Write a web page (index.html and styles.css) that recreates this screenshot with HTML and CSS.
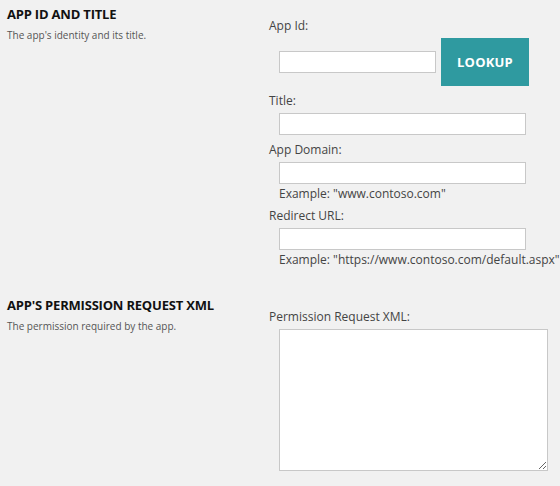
FILE: index.html
```html
<!DOCTYPE html>
<html lang="en">
<head>
<meta charset="utf-8">
<title>App Registration</title>
<link rel="stylesheet" href="styles.css">
</head>
<body>
<form class="page">
  <section class="section section-first">
    <div class="info">
      <h2 class="info-title">APP ID AND TITLE</h2>
      <p class="info-desc">The app's identity and its title.</p>
    </div>
    <div class="fields">
      <label class="label">App Id:</label>
      <div class="lookup-row">
        <input class="input input-short" type="text">
        <button class="btn-lookup" type="button">LOOKUP</button>
      </div>
      <label class="label">Title:</label>
      <div class="indent"><input class="input" type="text"></div>
      <label class="label">App Domain:</label>
      <div class="indent"><input class="input" type="text"></div>
      <div class="hint">Example: "www.contoso.com"</div>
      <label class="label">Redirect URL:</label>
      <div class="indent"><input class="input" type="text"></div>
      <div class="hint">Example: "https://www.contoso.com/default.aspx"</div>
    </div>
  </section>
  <section class="section">
    <div class="info">
      <h2 class="info-title">APP'S PERMISSION REQUEST XML</h2>
      <p class="info-desc">The permission required by the app.</p>
    </div>
    <div class="fields">
      <label class="label">Permission Request XML:</label>
      <div class="indent"><textarea class="textarea"></textarea></div>
    </div>
  </section>
</form>
</body>
</html>
```

FILE: styles.css
```css
html, body {
  margin: 0;
  padding: 0;
  background: #f1f1f1;
}
body {
  font-family: "Open Sans", "Noto Sans", "Liberation Sans", sans-serif;
  color: #444;
  width: 560px;
  height: 486px;
  overflow: hidden;
}
.page {
  display: flex;
  flex-direction: column;
  gap: 24px;
  padding: 6px 0 0 7px;
}
.section {
  display: flex;
}
.info {
  width: 262px;
  flex: none;
}
.info-title {
  margin: 0;
  font-size: 13px;
  line-height: 16px;
  font-weight: 700;
  color: #111;
  letter-spacing: -0.2px;
}
.info-desc {
  margin: 6px 0 0;
  font-size: 10px;
  line-height: 14px;
  color: #555;
}
.fields {
  display: flex;
  flex-direction: column;
  align-items: flex-start;
  padding-top: 11px;
}
.label {
  display: block;
  font-size: 12px;
  line-height: 18px;
  color: #444;
  margin-bottom: 3px;
  white-space: nowrap;
}
.indent {
  padding-left: 10px;
  margin-bottom: 6px;
}
.lookup-row {
  display: flex;
  align-items: center;
  gap: 5px;
  padding-left: 10px;
  margin-bottom: 6px;
}
.input {
  box-sizing: border-box;
  width: 247px;
  height: 22px;
  border: 1px solid #c8c8c8;
  background: #fff;
  margin: 0;
  padding: 0 4px;
  font: inherit;
  outline: none;
}
.input-short {
  width: 157px;
}
.btn-lookup {
  box-sizing: border-box;
  width: 88px;
  height: 48px;
  border: none;
  background: #2f9aa0;
  color: #fff;
  font-family: inherit;
  font-size: 13px;
  font-weight: 700;
  letter-spacing: 0.2px;
  padding: 0;
  margin: 0;
}
.hint {
  font-size: 12px;
  line-height: 18px;
  color: #444;
  padding-left: 10px;
  margin: -5px 0 4px;
  white-space: nowrap;
}
.textarea {
  box-sizing: border-box;
  display: block;
  width: 269px;
  height: 142px;
  border: 1px solid #c8c8c8;
  background: #fff;
  margin: 0;
  padding: 2px;
  font: inherit;
  outline: none;
}
```
